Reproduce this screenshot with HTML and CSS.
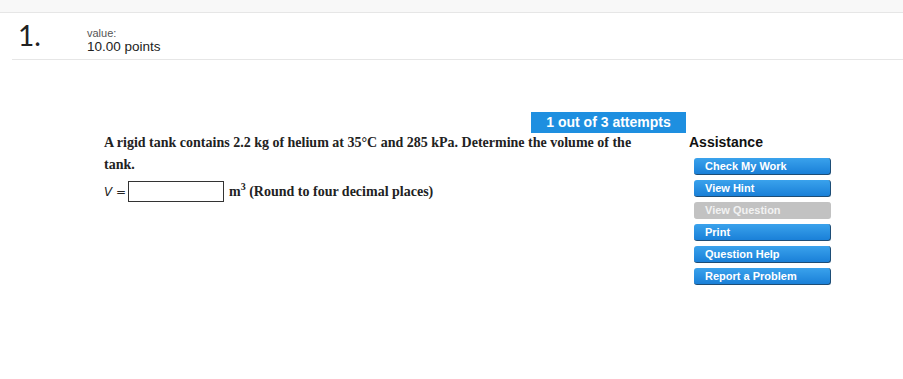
FILE: index.html
```html
<!DOCTYPE html>
<html>
<head>
<meta charset="utf-8">
<link rel="stylesheet" href="styles.css">
</head>
<body>
<div class="topband"></div>
<div class="header">
  <div class="qnum">1.</div>
  <div class="value">
    <div class="value-label">value:</div>
    <div class="value-points">10.00 points</div>
  </div>
</div>
<div class="main">
  <div class="qcol">
    <div class="attempts-row"><div class="attempts">1 out of 3 attempts</div></div>
    <div class="question">
      <p class="qtext">A rigid tank contains 2.2 kg of helium at 35°C and 285 kPa. Determine the volume of the tank.</p>
      <div class="answer">
        <span class="var"><i>V</i> =</span><span class="inbox"></span><span class="unit">m<sup>3</sup> (Round to four decimal places)</span>
      </div>
    </div>
  </div>
  <div class="assist">
    <div class="assist-title">Assistance</div>
    <div class="btn">Check My Work</div>
    <div class="btn">View Hint</div>
    <div class="btn disabled">View Question</div>
    <div class="btn">Print</div>
    <div class="btn">Question Help</div>
    <div class="btn">Report a Problem</div>
  </div>
</div>
</body>
</html>
```
FILE: styles.css
```css
html, body { margin: 0; padding: 0; background: #fff; }
body { font-family: "Liberation Sans", Arial, sans-serif; color: #222; }
.topband { height: 12px; background: #f8f8f8; border-bottom: 1px solid #e6e6e6; }
.header {
  margin-left: 12px;
  height: 46px;
  border-bottom: 1px solid #e6e6e6;
  display: flex;
  align-items: flex-start;
}
.qnum {
  font-family: Lato, "Liberation Sans", sans-serif;
  font-size: 28px;
  color: #222;
  margin-left: 6px;
  margin-top: 7px;
  line-height: 30px;
  width: 69px;
}
.value { margin-top: 14px; font-family: "Liberation Sans", Arial, sans-serif; }
.value-label { font-size: 11px; color: #555; line-height: 12px; }
.value-points { font-size: 13.5px; color: #222; line-height: 16px; margin-top: 0; }
.main { display: flex; padding-top: 52px; }
.qcol { width: 582px; margin-left: 104px; }
.attempts-row { display: flex; justify-content: flex-end; }
.attempts {
  width: 155px;
  height: 21px;
  background: #1e8fe0;
  color: #fff;
  font-weight: bold;
  font-size: 14px;
  line-height: 20px;
  text-align: center;
}
.question { font-family: "Liberation Serif", "Times New Roman", serif; font-weight: bold; font-size: 14px; color: #222; }
.qtext { margin: -1px 0 0 0; width: 545px; line-height: 22px; }
.answer { display: flex; align-items: center; margin-top: 5px; height: 21px; }
.var { font-family: "DejaVu Sans", sans-serif; font-weight: normal; font-size: 12px; color: #222; width: 24px; }
.var i { font-style: italic; }
.inbox { width: 94px; height: 19px; border: 1px solid #333; background: #fff; }
.unit { margin-left: 5px; }
.unit sup { font-size: 10px; line-height: 0; }
.assist { margin-left: 3px; padding-top: 21px; display: flex; flex-direction: column; }
.assist-title { font-weight: bold; font-size: 14px; color: #111; line-height: 18px; margin-bottom: 7px; }
.btn {
  margin-left: 5px;
  width: 137px;
  height: 17px;
  margin-bottom: 5px;
  box-sizing: border-box;
  padding-left: 11px;
  background: linear-gradient(#3aa2ec, #1a80d8);
  border-right: 1px solid #1d4d76;
  border-bottom: 1px solid #1d4d76;
  border-radius: 3px;
  color: #fff;
  font-weight: bold;
  font-size: 11px;
  line-height: 16px;
}
.btn.disabled { background: #c2c2c2; border-color: #c2c2c2; color: #f2f2f2; }
```
